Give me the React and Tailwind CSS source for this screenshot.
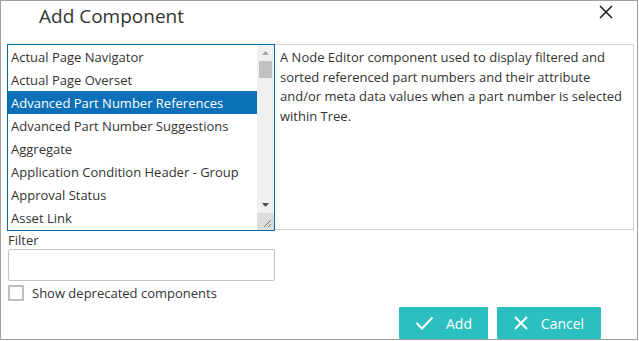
import React from 'react';

const items = [
  'Actual Page Navigator',
  'Actual Page Overset',
  'Advanced Part Number References',
  'Advanced Part Number Suggestions',
  'Aggregate',
  'Application Condition Header - Group',
  'Approval Status',
  'Asset Link',
];

const selected = 2;

export default function App() {
  return (
    <div className="w-[638px] h-[340px] border border-[#a0a0a0] bg-white flex flex-col text-[#333] font-['Open_Sans',sans-serif]">
      <div className="flex justify-between h-[43px]">
        <h1 className="pl-[38px] pt-[1px] text-[19px] leading-[28px] text-[#333]">Add Component</h1>
        <svg className="mt-[4px] mr-[24px]" width="14" height="14" viewBox="0 0 14 14">
          <path d="M1 1 L13 13 M13 1 L1 13" stroke="#222" strokeWidth="1.6" fill="none" />
        </svg>
      </div>

      <div className="flex pl-[6px] pr-[3px]">
        <div className="w-[268px] h-[187px] border border-[#0b6aa8] flex">
          <ul className="flex-1 overflow-hidden">
            {items.map((item, i) => (
              <li
                key={item}
                className={
                  'h-[23px] leading-[24px] pl-[3px] text-[13px] whitespace-nowrap ' +
                  (i === selected ? 'bg-[#0b70b7] text-white' : 'text-[#333]')
                }
              >
                {item}
              </li>
            ))}
          </ul>
          <div className="w-[17px] bg-[#f0f0f0] flex flex-col">
            <div className="h-[16px] flex items-center justify-center">
              <svg width="7" height="4" viewBox="0 0 7 4"><path d="M0 4 L3.5 0 L7 4 Z" fill="#a3a3a3" /></svg>
            </div>
            <div className="mx-[2px] h-[17px] bg-[#c1c1c1]" />
            <div className="flex-1" />
            <div className="h-[16px] flex items-center justify-center">
              <svg width="7" height="4" viewBox="0 0 7 4"><path d="M0 0 L7 0 L3.5 4 Z" fill="#505050" /></svg>
            </div>
            <div className="h-[17px] bg-[#dcdcdc] flex items-end justify-end p-[2px]">
              <svg width="9" height="9" viewBox="0 0 9 9">
                <path d="M1 8 L8 1 M5 8 L8 5" stroke="#777" strokeWidth="1" fill="none" />
              </svg>
            </div>
          </div>
        </div>
        <div className="flex-1 h-[186px] border-y border-r border-[#d4d4d4] pl-[5px] pr-[6px] pt-[3px] text-[13px] leading-[19.5px] text-[#333]">
          A Node Editor component used to display filtered and sorted referenced part numbers and their attribute and/or meta data values when a part number is selected within Tree.
        </div>
      </div>

      <div className="pl-[7px]">
        <label className="block text-[13px] leading-[18px] text-[#333]">Filter</label>
        <input className="block w-[267px] h-[32px] border border-[#c4c4c4] rounded-[2px] outline-none" />
        <label className="flex items-center mt-[4px] text-[13px] text-[#333]">
          <span className="w-[16px] h-[16px] border-2 border-[#bdbdbd] rounded-[1px]" />
          <span className="ml-[8px] leading-[16px]">Show deprecated components</span>
        </label>
      </div>

      <div className="flex justify-end gap-[9px] pr-[36px] mt-[6px]">
        <button className="w-[89px] h-[32px] bg-[#2bbfbf] text-white text-[14px] flex items-center justify-center gap-[12px] rounded-[1px]">
          <svg width="19" height="14" viewBox="0 0 19 14">
            <path d="M1.5 7 L7 12.5 L17.5 1.5" stroke="white" strokeWidth="2" fill="none" />
          </svg>
          <span>Add</span>
        </button>
        <button className="w-[104px] h-[32px] bg-[#2bbfbf] text-white text-[14px] flex items-center justify-center gap-[13px] rounded-[1px]">
          <svg width="14" height="14" viewBox="0 0 14 14">
            <path d="M1 1 L13 13 M13 1 L1 13" stroke="white" strokeWidth="2" fill="none" />
          </svg>
          <span>Cancel</span>
        </button>
      </div>
    </div>
  );
}
